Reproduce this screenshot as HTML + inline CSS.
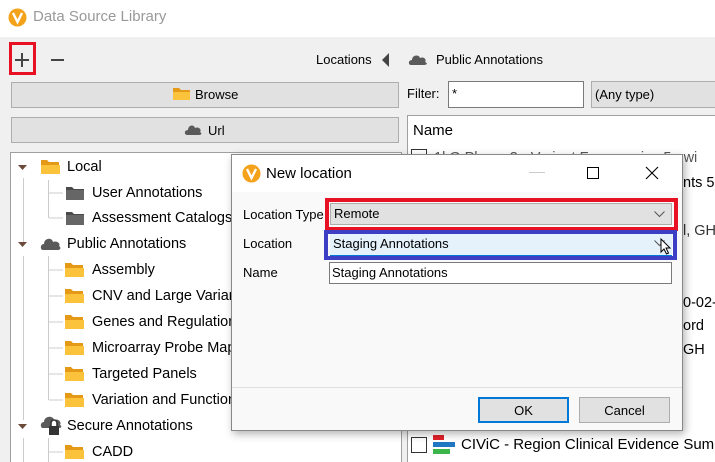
<!DOCTYPE html>
<html><head><style>
*{box-sizing:border-box;margin:0;padding:0}
html,body{width:715px;height:462px;overflow:hidden}
body{background:#f0f0f0;font-family:"Liberation Sans",sans-serif;font-size:14px;color:#000;position:relative}
.a{position:absolute;white-space:nowrap}
.btn{position:absolute;background:#e1e1e1;border:1px solid #adadad}
.t{position:absolute;font-size:14.5px;line-height:18px;white-space:nowrap}
</style></head><body>
<div class="a" style="left:0;top:0;width:715px;height:37px;background:#fff"></div>
<svg class="a" style="left:8px;top:8px" width="19" height="19"><circle cx="9.5" cy="9.5" r="9" fill="#f5a21b"/><path d="M5 5 L9.5 14 L14 5" stroke="#fff" stroke-width="2.4" fill="none"/></svg>
<div class="a" style="left:33px;top:8px;font-size:15px;color:#999">Data Source Library</div>
<div class="a" style="left:9px;top:42px;width:27px;height:33px;border:3px solid #e81123"></div>
<div class="a" style="left:15px;top:59px;width:14px;height:2px;background:#444"></div>
<div class="a" style="left:21px;top:53px;width:2px;height:14px;background:#444"></div>
<div class="a" style="left:51px;top:59px;width:13px;height:2px;background:#444"></div>
<div class="a" style="left:316px;top:52px;font-size:13px">Locations</div>
<svg class="a" style="left:382px;top:53px" width="8" height="14"><path d="M7 0 L0 7 L7 14Z" fill="#444"/></svg>
<svg class="a" style="left:408px;top:53px" width="20" height="13"><path d="M3 12 C0 12 0 7 4 7 C4 2 11 1 12 5 C16 3 19 7 17 9 C20 10 19 12 16 12Z" fill="#5a5a5a"/></svg>
<div class="a" style="left:436px;top:52px;font-size:13px">Public Annotations</div>
<div class="btn" style="left:11px;top:82px;width:388px;height:26px"></div>
<svg class="a" style="left:172px;top:86px" width="19" height="15"><path d="M1 2 h6 l2 2 h9 v10 h-17z" fill="#e49a17"/><path d="M1 6 h17 v8 h-17z" fill="#fbc23b"/></svg>
<div class="a" style="left:195px;top:87px;font-size:13px">Browse</div>
<div class="btn" style="left:11px;top:117px;width:388px;height:26px"></div>
<svg class="a" style="left:184px;top:124px" width="18" height="12"><path d="M3 11 C0 11 0 6 4 6 C4 1 10 0 11 4 C15 2 18 6 16 8 C18 9 18 11 15 11Z" fill="#5a5a5a"/></svg>
<div class="a" style="left:208px;top:123px;font-size:13px">Url</div>
<div class="a" style="left:10px;top:152px;width:392px;height:320px;background:#fff;border:1px solid #a0a0a0"></div>
<div class="a" style="left:23px;top:178px;width:1px;height:64px;background:#ccc"></div>
<div class="a" style="left:23px;top:256px;width:1px;height:164px;background:#ccc"></div>
<div class="a" style="left:23px;top:438px;width:1px;height:30px;background:#ccc"></div>
<div class="a" style="left:48px;top:180px;width:1px;height:38px;background:#ccc"></div>
<div class="a" style="left:48px;top:256px;width:1px;height:144px;background:#ccc"></div>
<div class="a" style="left:48px;top:438px;width:1px;height:30px;background:#ccc"></div>
<svg class="a" style="left:0;top:150px" width="100" height="312">
<g fill="#6b4a3a"><path d="M18 15 h9 l-4.5 5z"/><path d="M18 92 h9 l-4.5 5z"/><path d="M18 274 h9 l-4.5 5z"/></g>
<g stroke="#ccc"><path d="M49 43h14M49 68h14M49 120h14M49 146h14M49 172h14M49 198h14M49 224h14M49 250h14M49 302h14"/></g>
</svg>
<svg class="a" style="left:40px;top:158px" width="21" height="17"><path d="M1 2h6l2 2h10v12h-18z" fill="#e49a17"/><path d="M1 7h19v9h-19z" fill="#fbc23b"/></svg>
<svg class="a" style="left:65px;top:186px" width="20" height="15"><path d="M1 1h6l2 2h10v11h-18z" fill="#4a4a4a"/><path d="M1 4h18v10h-18z" fill="#666"/></svg>
<svg class="a" style="left:65px;top:211px" width="20" height="15"><path d="M1 1h6l2 2h10v11h-18z" fill="#4a4a4a"/><path d="M1 4h18v10h-18z" fill="#666"/></svg>
<svg class="a" style="left:40px;top:237px" width="21" height="14"><path d="M3 13 C0 13 0 7 4 7 C4 1 12 0 13 5 C17 3 21 7 19 9 C21 10 21 13 18 13Z" fill="#5a5a5a"/></svg>
<svg class="a" style="left:40px;top:416px" width="22" height="20"><path d="M3 12 C0 12 0 6 4 6 C4 0 13 -1 14 4 C18 2 22 6 20 9 C22 10 22 12 19 12Z" fill="#5a5a5a"/><rect x="9" y="10" width="10" height="9" fill="#333"/><path d="M11 10 v-3 a3 3 0 0 1 6 0 v3" stroke="#333" stroke-width="1.6" fill="#fff"/></svg>
<svg class="a" style="left:64px;top:262px" width="21" height="200">
<defs><g id="f"><path d="M1 1h6l2 2h10v12h-18z" fill="#e49a17"/><path d="M1 6h19v9h-19z" fill="#fbc23b"/></g></defs>
<use href="#f" y="0"/><use href="#f" y="26"/><use href="#f" y="52"/><use href="#f" y="78"/><use href="#f" y="104"/><use href="#f" y="130"/><use href="#f" y="182"/>
</svg>
<div class="t" style="left:67px;top:158px">Local</div>
<div class="t" style="left:92px;top:184px">User Annotations</div>
<div class="t" style="left:92px;top:209px">Assessment Catalogs</div>
<div class="t" style="left:67px;top:235px">Public Annotations</div>
<div class="t" style="left:92px;top:261px">Assembly</div>
<div class="t" style="left:92px;top:287px">CNV and Large Variants</div>
<div class="t" style="left:92px;top:313px">Genes and Regulation</div>
<div class="t" style="left:92px;top:339px">Microarray Probe Maps</div>
<div class="t" style="left:92px;top:365px">Targeted Panels</div>
<div class="t" style="left:92px;top:391px">Variation and Functional</div>
<div class="t" style="left:67px;top:417px">Secure Annotations</div>
<div class="t" style="left:92px;top:443px">CADD</div>
<div class="a" style="left:407px;top:86px;font-size:13px">Filter:</div>
<div class="a" style="left:448px;top:81px;width:136px;height:27px;background:#fff;border:1px solid #7a7a7a;padding:4px 3px;font-size:13px">*</div>
<div class="a" style="left:591px;top:81px;width:130px;height:27px;background:#e1e1e1;border:1px solid #adadad;padding:5px 3px;font-size:13px">(Any type)</div>
<div class="a" style="left:407px;top:115px;width:320px;height:360px;background:#fff;border:1px solid #a0a0a0"></div>
<div class="a" style="left:413px;top:122px;font-size:15px">Name</div>
<div class="a" style="left:411px;top:149px;width:16px;height:16px;border:1px solid #333;background:#fff"></div>
<div class="t" style="left:434px;top:149px;color:#555">1kG Phase 3 - Variant Frequencies 5a wi</div>
<div class="t" style="left:683px;top:174px">nts 5l</div>
<div class="t" style="left:683px;top:222px;color:#333">l, GHI</div>
<div class="t" style="left:683px;top:294px">0-02-</div>
<div class="t" style="left:683px;top:317px">ord</div>
<div class="t" style="left:683px;top:341px">GH</div>
<div class="a" style="left:411px;top:437px;width:16px;height:16px;border:1px solid #333;background:#fff"></div>
<svg class="a" style="left:433px;top:435px" width="24" height="20"><rect x="0" y="0" width="11" height="5" fill="#e0202a"/><rect x="0" y="7" width="22" height="5" fill="#1f77c4"/><rect x="0" y="14" width="17" height="5" fill="#3cb54a"/></svg>
<div class="a" style="left:461px;top:436px;font-size:15px">CIViC - Region Clinical Evidence Summary</div>
<div class="a" style="left:231px;top:154px;width:452px;height:277px;background:#f9f9f9;border:1px solid #888;box-shadow:2px 3px 8px rgba(0,0,0,.3)"></div>
<div class="a" style="left:232px;top:155px;width:450px;height:37px;background:#fff"></div>
<svg class="a" style="left:242px;top:164px" width="19" height="19"><circle cx="9.5" cy="9.5" r="9" fill="#f5a21b"/><path d="M5 5 L9.5 14 L14 5" stroke="#fff" stroke-width="2.4" fill="none"/></svg>
<div class="a" style="left:266px;top:165px;font-size:15px">New location</div>
<div class="a" style="left:529px;top:172px;width:16px;height:1px;background:#ccc"></div>
<div class="a" style="left:587px;top:167px;width:12px;height:12px;border:1px solid #000"></div>
<svg class="a" style="left:645px;top:166px" width="14" height="14"><path d="M1 1L13 13M13 1L1 13" stroke="#000" stroke-width="1.1"/></svg>
<div class="a" style="left:243px;top:207px;font-size:13px">Location Type</div>
<div class="a" style="left:243px;top:236px;font-size:13px">Location</div>
<div class="a" style="left:243px;top:265px;font-size:13px">Name</div>
<div class="a" style="left:325px;top:198px;width:353px;height:33px;border:4px solid #e81123"></div>
<div class="a" style="left:330px;top:203px;width:342px;height:22px;background:#e1e1e1;border:1px solid #adadad;padding:2px 3px;font-size:13px">Remote</div>
<svg class="a" style="left:654px;top:211px" width="11" height="7"><path d="M0.5 0.5L5.5 5.5L10.5 0.5" stroke="#555" fill="none"/></svg>
<div class="a" style="left:324px;top:230px;width:353px;height:30px;border:4px solid #3c3fc6"></div>
<div class="a" style="left:330px;top:234px;width:342px;height:22px;background:#e5f1fb;border-bottom:1px solid #0078d7;padding:2px 3px;font-size:13px">Staging Annotations</div>
<svg class="a" style="left:654px;top:240px" width="11" height="7"><path d="M0.5 0.5L5.5 5.5L10.5 0.5" stroke="#555" fill="none"/></svg>
<svg class="a" style="left:660px;top:238px" width="12" height="18"><path d="M1 1 L1 14 L4 11 L6.5 16 L8.5 15 L6 10 L10 10Z" fill="#fff" stroke="#000"/></svg>
<div class="a" style="left:329px;top:262px;width:343px;height:22px;background:#fff;border:1px solid #7a7a7a;padding:2px 2px;font-size:13px">Staging Annotations</div>
<div class="a" style="left:232px;top:387px;width:450px;height:1px;background:#e0e0e0"></div>
<div class="a" style="left:478px;top:397px;width:91px;height:26px;background:#e1e1e1;border:2px solid #0078d7;text-align:center;padding-top:4px;font-size:13px">OK</div>
<div class="a" style="left:579px;top:397px;width:91px;height:26px;background:#e1e1e1;border:1px solid #adadad;text-align:center;padding-top:5px;font-size:13px">Cancel</div>
</body></html>
